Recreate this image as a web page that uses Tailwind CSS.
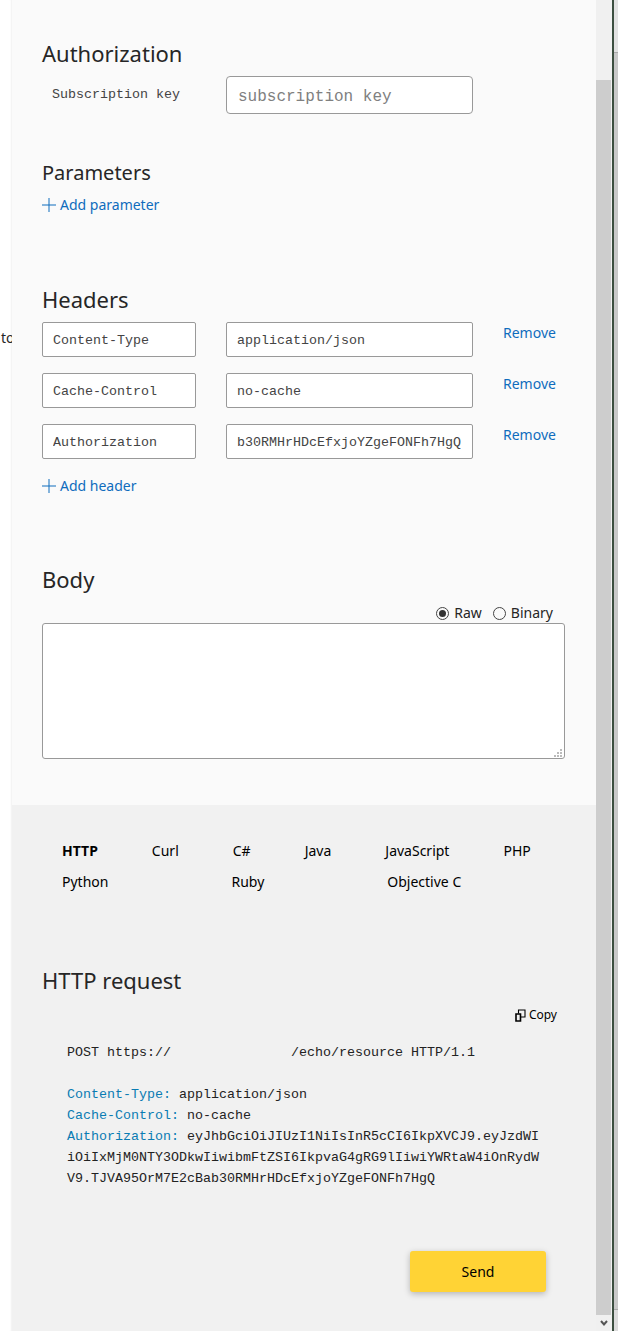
<!DOCTYPE html>
<html lang="en">

<head>
    <meta charset="UTF-8" />
    <meta name="viewport" content="width=device-width, initial-scale=1.0" />
    <title>Try it</title>
    <script src="https://cdn.jsdelivr.net/npm/@tailwindcss/browser@4"></script>
</head>

<body class="bg-white overflow-hidden font-['Noto_Sans',sans-serif] text-[#262626]">
    <div class="flex h-[1331px] w-[618px]">
        <!-- left gutter -->
        <div class="w-3 shrink-0 overflow-hidden whitespace-nowrap bg-white pl-[1px] pt-[328px] text-[14px] leading-5 shadow-[inset_-2px_0_2px_-1px_rgba(0,0,0,0.06)]">to</div>

        <!-- main panel -->
        <main class="w-[584px] shrink-0">
            <section class="h-[805px] bg-[#fafafa] pl-[30px] pt-[38px]">
                <h2 class="text-[22px] leading-[30px]">Authorization</h2>
                <div class="mt-2 flex">
                    <label class="w-[184px] pl-[10px] pt-[11px] font-['Liberation_Mono',monospace] text-[13.33px] leading-4 text-[#444]">Subscription key</label>
                    <input class="h-[38px] w-[247px] rounded-[4px] border border-[#999] bg-white px-[11px] pt-1 font-['Liberation_Mono',monospace] text-[16px] placeholder:text-[#808080]" placeholder="subscription key" />
                </div>

                <h2 class="mt-[44px] text-[20px] leading-[30px]">Parameters</h2>
                <a class="mt-[7px] flex h-5 items-center gap-[4px] text-[14px] leading-5 text-[#0f6cbd]">
                    <svg class="h-[14px] w-[14px]" viewBox="0 0 14 14" fill="none" stroke="#0f6cbd" stroke-width="1"><path d="M7 0v14M0 7h14" /></svg>
                    Add parameter
                </a>

                <h2 class="mt-[69px] text-[22px] leading-[30px]">Headers</h2>
                <div class="mt-2 flex flex-col gap-4">
                    <div class="flex">
                        <input class="h-[35px] w-[154px] rounded-[2px] border border-[#999] bg-white px-[10px] pt-[2px] font-['Liberation_Mono',monospace] text-[13.33px] text-[#444]" value="Content-Type" />
                        <input class="ml-[30px] h-[35px] w-[247px] rounded-[2px] border border-[#999] bg-white px-[10px] pt-[2px] font-['Liberation_Mono',monospace] text-[13.33px] text-[#444]" value="application/json" />
                        <a class="ml-[30px] pt-[1px] text-[14px] leading-5 text-[#0f6cbd]">Remove</a>
                    </div>
                    <div class="flex">
                        <input class="h-[35px] w-[154px] rounded-[2px] border border-[#999] bg-white px-[10px] pt-[2px] font-['Liberation_Mono',monospace] text-[13.33px] text-[#444]" value="Cache-Control" />
                        <input class="ml-[30px] h-[35px] w-[247px] rounded-[2px] border border-[#999] bg-white px-[10px] pt-[2px] font-['Liberation_Mono',monospace] text-[13.33px] text-[#444]" value="no-cache" />
                        <a class="ml-[30px] pt-[1px] text-[14px] leading-5 text-[#0f6cbd]">Remove</a>
                    </div>
                    <div class="flex">
                        <input class="h-[35px] w-[154px] rounded-[2px] border border-[#999] bg-white px-[10px] pt-[2px] font-['Liberation_Mono',monospace] text-[13.33px] text-[#444]" value="Authorization" />
                        <div class="ml-[30px] flex h-[35px] w-[247px] items-center overflow-hidden whitespace-nowrap rounded-[2px] border border-[#999] bg-white pl-[10px] pt-[2px] font-['Liberation_Mono',monospace] text-[13.33px] text-[#444]">b30RMHrHDcEfxjoYZgeFONFh7HgQ</div>
                        <a class="ml-[30px] pt-[1px] text-[14px] leading-5 text-[#0f6cbd]">Remove</a>
                    </div>
                </div>
                <a class="mt-[17px] flex h-5 items-center gap-[4px] text-[14px] leading-5 text-[#0f6cbd]">
                    <svg class="h-[14px] w-[14px]" viewBox="0 0 14 14" fill="none" stroke="#0f6cbd" stroke-width="1"><path d="M7 0v14M0 7h14" /></svg>
                    Add header
                </a>

                <h2 class="mt-[68px] text-[22px] leading-[30px]">Body</h2>
                <div class="mt-[9px] flex h-5 w-[511px] items-center justify-end gap-[5px] text-[14px] leading-5">
                    <span class="flex h-[13px] w-[13px] items-center justify-center rounded-full border border-[#444]"><span class="h-[7px] w-[7px] rounded-full bg-[#333]"></span></span>
                    <span class="mr-[6px]">Raw</span>
                    <span class="h-[13px] w-[13px] rounded-full border border-[#444]"></span>
                    <span>Binary</span>
                </div>
                <div class="relative h-[136px] w-[523px]">
                    <textarea class="block h-[136px] w-[523px] resize-none rounded-[3px] border border-[#999] bg-white"></textarea>
                    <!-- resize grip -->
                    <svg class="absolute bottom-[2px] right-[3px] h-2 w-2" viewBox="0 0 8 8" fill="#bbb"><path d="M6 0h2v2H6zM3 3h2v2H3zM6 3h2v2H6zM0 6h2v2H0zM3 6h2v2H3zM6 6h2v2H6z" /></svg>
                </div>
            </section>

            <section class="h-[526px] bg-[#f1f1f1] pl-[30px] pt-[36px]">
                <div class="ml-5 flex gap-[54px] text-[14px] leading-5 text-black">
                    <span class="font-bold">HTTP</span>
                    <span>Curl</span>
                    <span>C#</span>
                    <span>Java</span>
                    <span>JavaScript</span>
                    <span>PHP</span>
                </div>
                <div class="ml-5 mt-[11px] flex gap-[123px] text-[14px] leading-5 text-black">
                    <span>Python</span>
                    <span>Ruby</span>
                    <span>Objective C</span>
                </div>

                <h2 class="mt-[73px] text-[22px] leading-[30px]">HTTP request</h2>

                <div class="mt-3 flex w-[515px] items-center justify-end gap-[3px] text-[12px] leading-4 text-black">
                    <svg class="h-[13px] w-[11px]" viewBox="0 0 11 13" fill="none" stroke="#000"><path stroke-width="1.6" d="M1 5h4.5v7H1z" /><path stroke-width="1.1" d="M3.5 4.5V1h6.5v7H6" /></svg>
                    Copy
                </div>

                <pre class="ml-[25px] mt-[19px] w-[480px] whitespace-pre-wrap break-all font-['Liberation_Mono',monospace] text-[13.33px] leading-[21px] text-[#222]">POST https://               /echo/resource HTTP/1.1

<span class="text-[#0a7cb3]">Content-Type:</span> application/json
<span class="text-[#0a7cb3]">Cache-Control:</span> no-cache
<span class="text-[#0a7cb3]">Authorization:</span> eyJhbGciOiJIUzI1NiIsInR5cCI6IkpXVCJ9.eyJzdWI
iOiIxMjM0NTY3ODkwIiwibmFtZSI6IkpvaG4gRG9lIiwiYWRtaW4iOnRydW
V9.TJVA95OrM7E2cBab30RMHrHDcEfxjoYZgeFONFh7HgQ</pre>

                <button class="ml-[368px] mt-[62px] block h-[41px] w-[136px] rounded-[3px] bg-[#ffd335] text-[14px] text-black shadow-[0_2px_6px_rgba(0,0,0,0.25)]">Send</button>
            </section>
        </main>

        <!-- scrollbar -->
        <div class="flex h-full w-4 shrink-0 flex-col bg-[#f0f0f0]">
            <div class="h-20 shrink-0"></div>
            <div class="w-[15px] flex-1 bg-[#cdcdcd]"></div>
            <div class="flex h-4 shrink-0 items-center justify-center">
                <svg class="h-2 w-2" viewBox="0 0 8 8" fill="none" stroke="#555" stroke-width="2"><path d="M1 2l3 3.5L7 2" /></svg>
            </div>
        </div>

        <!-- window edge -->
        <div class="w-[2px] shrink-0 bg-[#3c4f40]"></div>
        <div class="flex flex-1 flex-col bg-[#c9c9c9]">
            <div class="h-[53px] shrink-0 border-b border-[#aaa] bg-[#e2e2e2]"></div>
            <div class="flex-1"></div>
            <div class="h-[22px] shrink-0 border-t border-[#aaa] bg-[#dcdcdc]"></div>
        </div>
    </div>
</body>

</html>
